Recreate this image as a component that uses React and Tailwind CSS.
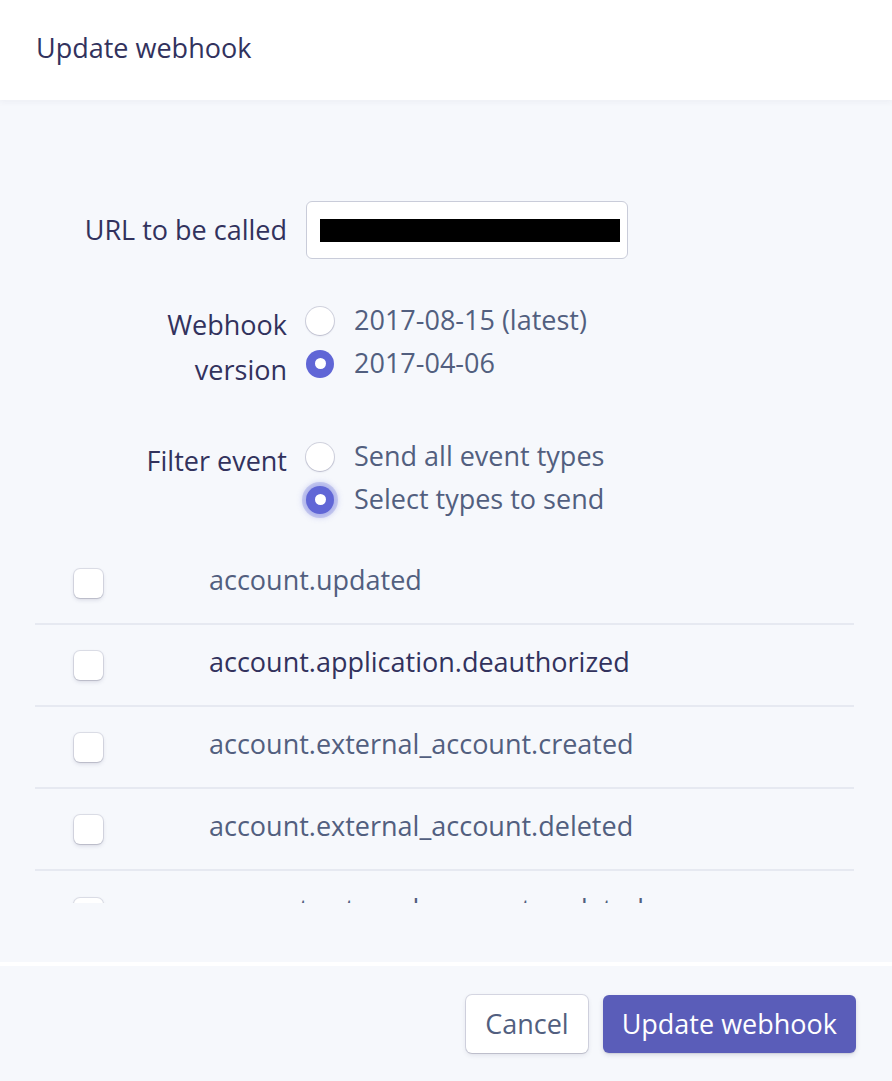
import { useState } from 'react';

const events = [
  'account.updated',
  'account.application.deauthorized',
  'account.external_account.created',
  'account.external_account.deleted',
  'account.external_account.updated',
];

const Radio = ({ checked, focused }) => (
  <span
    className={
      checked
        ? `w-[28px] h-[28px] rounded-full bg-[#6066d6] flex items-center justify-center shrink-0 ${
            focused ? 'shadow-[0_0_0_4px_rgba(96,102,214,0.25),0_0_6px_3px_rgba(96,102,214,0.35)]' : ''
          }`
        : 'w-[28px] h-[28px] rounded-full bg-white shrink-0 shadow-[0_0_0_1px_rgba(50,50,93,0.18),0_1px_2px_rgba(50,50,93,0.15)]'
    }
  >
    {checked && <span className="w-[11px] h-[11px] rounded-full bg-white" />}
  </span>
);

const RadioGroup = ({ options, value, focused }) => (
  <div className="flex flex-col">
    {options.map((opt) => (
      <label key={opt} className="flex items-center gap-[20px] h-[43px]">
        <Radio checked={opt === value} focused={focused && opt === value} />
        <span className="text-[27px] leading-[43px] -mt-[2px] text-[#525f7f]">{opt}</span>
      </label>
    ))}
  </div>
);

export default function App() {
  const [checked] = useState({});

  return (
    <div className="w-[892px] h-[1081px] flex flex-col bg-[#f6f8fc] font-['Open_Sans','Noto_Sans',sans-serif] overflow-hidden">
      {/* header */}
      <div className="h-[100px] shrink-0 bg-white flex items-center px-[36px] shadow-[0_2px_6px_rgba(50,50,93,0.05)] relative z-10">
        <h1 className="text-[27px] text-[#32325d] -mt-[4px]">Update webhook</h1>
      </div>

      {/* body */}
      <div className="flex-1 flex flex-col pt-[101px] pl-[35px] pr-[38px]">
        <div className="flex items-center gap-[19px] -ml-[35px]">
          <div className="w-[287px] text-right text-[27px] text-[#32325d]">URL to be called</div>
          <div className="w-[322px] h-[58px] bg-white rounded-[6px] border border-[#c9ccd9] flex items-center pl-[13px]">
            <div className="w-[300px] h-[23px] bg-black" />
          </div>
        </div>

        <div className="flex items-start gap-[19px] -ml-[35px] mt-[40px]">
          <div className="w-[287px] text-right text-[27px] leading-[45px] pt-[3px] text-[#32325d]">
            Webhook
            <br />
            version
          </div>
          <RadioGroup options={['2017-08-15 (latest)', '2017-04-06']} value="2017-04-06" />
        </div>

        <div className="flex items-start gap-[19px] -ml-[35px] mt-[43px]">
          <div className="w-[287px] text-right text-[27px] leading-[45px] pt-[3px] text-[#32325d]">Filter event</div>
          <RadioGroup
            options={['Send all event types', 'Select types to send']}
            value="Select types to send"
            focused
          />
        </div>

        {/* event list, scrolls */}
        <div className="mt-[22px] h-[360px] overflow-hidden">
          {events.map((ev, i) => (
            <div
              key={ev}
              className={`h-[82px] flex items-center pl-[39px] ${i < events.length - 1 ? 'border-b-2 border-[#e6e9f1]' : ''}`}
            >
              <span
                className={`w-[29px] h-[29px] rounded-[6px] bg-white shrink-0 shadow-[0_0_0_1px_rgba(50,50,93,0.12),0_2px_4px_rgba(50,50,93,0.15),0_1px_1px_rgba(0,0,0,0.08)] ${
                  checked[ev] ? 'bg-[#6066d6]' : ''
                }`}
              />
              <span
                className={`ml-[106px] text-[27px] -mt-[5px] ${
                  i === 1 ? 'text-[#32325d]' : 'text-[#525f7f]'
                }`}
              >
                {ev}
              </span>
            </div>
          ))}
        </div>
      </div>

      {/* footer */}
      <div className="h-[119px] shrink-0 border-t-4 border-white flex items-start justify-end gap-[15px] pt-[29px] pr-[36px]">
        <button className="h-[58px] px-[19px] bg-white rounded-[6px] text-[27px] text-[#525f7f] shadow-[0_0_0_1px_rgba(50,50,93,0.15),0_2px_5px_rgba(50,50,93,0.12),0_1px_1px_rgba(0,0,0,0.07)]">
          Cancel
        </button>
        <button className="h-[58px] px-[19px] bg-[#5a5db9] rounded-[6px] text-[27px] text-white shadow-[0_2px_5px_rgba(50,50,93,0.15),0_1px_1px_rgba(0,0,0,0.08)]">
          Update webhook
        </button>
      </div>
    </div>
  );
}
